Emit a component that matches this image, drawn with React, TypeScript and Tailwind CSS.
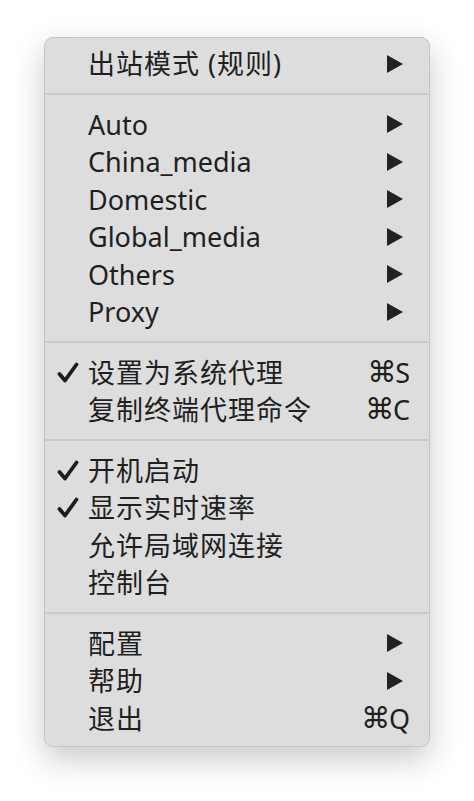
import type { ReactNode } from "react";

type Item = {
  label: string;
  checked?: boolean;
  submenu?: boolean;
  shortcut?: string;
};

const sections: Item[][] = [
  [{ label: "出站模式 (规则)", submenu: true }],
  [
    { label: "Auto", submenu: true },
    { label: "China_media", submenu: true },
    { label: "Domestic", submenu: true },
    { label: "Global_media", submenu: true },
    { label: "Others", submenu: true },
    { label: "Proxy", submenu: true },
  ],
  [
    { label: "设置为系统代理", checked: true, shortcut: "S" },
    { label: "复制终端代理命令", shortcut: "C" },
  ],
  [
    { label: "开机启动", checked: true },
    { label: "显示实时速率", checked: true },
    { label: "允许局域网连接" },
    { label: "控制台" },
  ],
  [
    { label: "配置", submenu: true },
    { label: "帮助", submenu: true },
    { label: "退出", shortcut: "Q" },
  ],
];

const hasCjk = (s: string) => /[\u4e00-\u9fff]/.test(s);

function CheckMark() {
  return (
    <svg width="22" height="21" viewBox="0 0 22 21" aria-hidden="true">
      <path
        d="M2.5 12 L8 18.5 L19.5 2.5"
        fill="none"
        stroke="#1c1c1c"
        strokeWidth="3.8"
        strokeLinecap="round"
        strokeLinejoin="round"
      />
    </svg>
  );
}

function Arrow() {
  return (
    <svg width="16" height="18" viewBox="0 0 16 18" aria-hidden="true">
      <polygon points="0,0 16,9 0,18" fill="#222222" />
    </svg>
  );
}

function Row({ item }: { item: Item }) {
  let trailing: ReactNode = null;
  if (item.submenu) trailing = <span className="mr-[26px] flex"><Arrow /></span>;
  if (item.shortcut)
    trailing = (
      <span className="mr-[19px] flex items-center">
        <span
          className="text-[29px] leading-none"
          style={{ fontFamily: '"DejaVu Sans", sans-serif' }}
        >
          ⌘
        </span>
        <span className="-ml-[1px]">{item.shortcut}</span>
      </span>
    );

  return (
    <div className="flex h-[37.5px] items-center">
      <span className="flex w-[43px] shrink-0 justify-end pr-[9px]">
        {item.checked ? <CheckMark /> : null}
      </span>
      <span
        className={
          hasCjk(item.label)
            ? "flex-1 whitespace-nowrap tracking-[1px]"
            : "flex-1 whitespace-nowrap"
        }
      >
        {item.label}
      </span>
      {trailing}
    </div>
  );
}

export default function App() {
  return (
    <div className="min-h-[801px] bg-white pl-[44px] pt-[37px]">
      <div
        className="w-[386px] rounded-[9px] border border-[#c4c4c4] bg-[#dddddd] pt-[7px] pb-[9px] text-[27px] leading-none text-[#1f1f1f] shadow-[0_12px_32px_rgba(0,0,0,0.22)]"
        style={{ fontFamily: '"Noto Sans", "Noto Sans CJK SC", sans-serif' }}
      >
        {sections.map((section, si) => (
          <div key={si}>
            {si > 0 ? (
              <div className="flex h-[23px] items-center">
                <div className="h-[2px] w-full bg-[#c9c9c9]" />
              </div>
            ) : null}
            {section.map((item) => (
              <Row key={item.label} item={item} />
            ))}
          </div>
        ))}
      </div>
    </div>
  );
}
